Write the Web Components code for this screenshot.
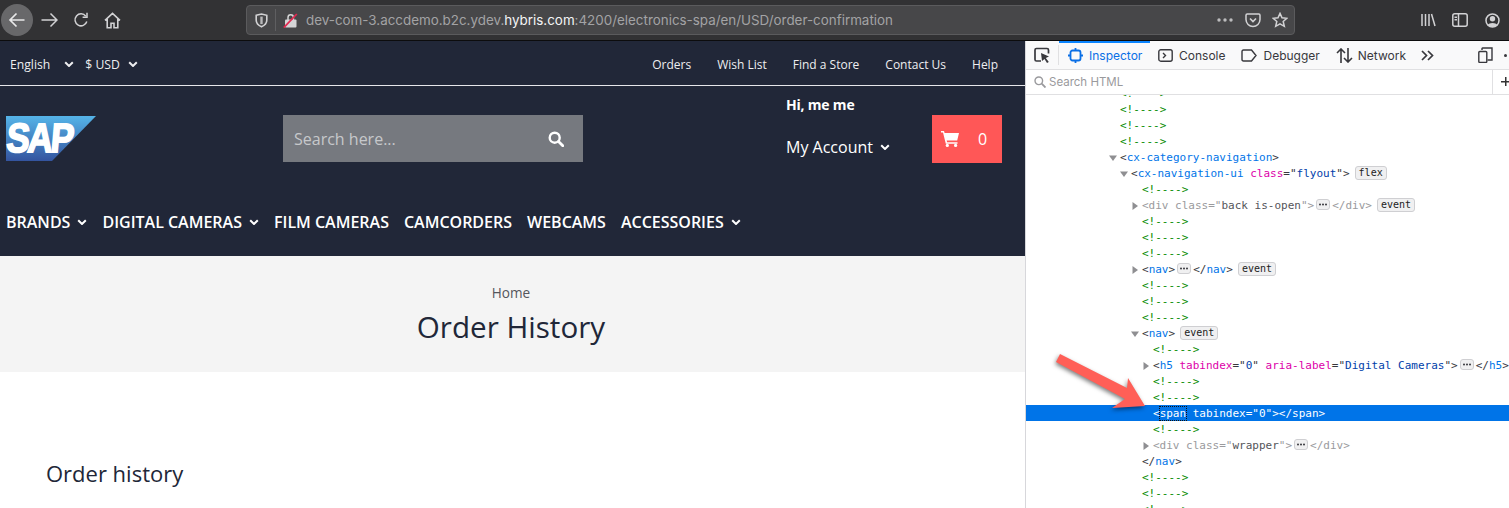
<!DOCTYPE html>
<html>
<head>
<meta charset="utf-8">
<title>Order History</title>
<style>
html, body { margin: 0; padding: 0; height: 100%; overflow: hidden; background: #fff; }
body { display: flex; flex-direction: column; height: 508px; position: relative; }
</style>
</head>
<body>
<browser-bar></browser-bar>
<div style="display:flex;flex:1;min-height:0">
  <store-page></store-page>
  <dev-tools></dev-tools>
</div>
<note-arrow></note-arrow>

<script>
class BrowserBar extends HTMLElement {
  constructor() {
    super();
    this.attachShadow({mode: 'open'});
    this.shadowRoot.innerHTML = `
<style>
:host { display: flex; align-items: center; height: 40px; background: #323234; border-bottom: 1px solid #0c0c0d; flex: none; font-family: Inter, "Liberation Sans", sans-serif; position: relative; }
svg { display: block; fill: none; stroke: #d2d2d4; stroke-width: 1.5; }
.nav { display: flex; align-items: center; width: 246px; flex: none; }
.back { width: 32px; height: 32px; border-radius: 50%; background: #68686a; margin-left: 1px; display: flex; align-items: center; justify-content: center; flex: none; }
.forward { margin-left: 8px; } .reload { margin-left: 15px; } .home { margin-left: 15px; }
.url { width: 1049px; height: 30px; box-sizing: border-box; background: #474749; border: 1px solid #5b5b5d; border-radius: 4px; display: flex; align-items: center; flex: none; }
.sep { width: 1px; height: 22px; background: #5f5f61; margin: 0 7px 0 7px; }
.addr { font-size: 13.4px; color: #a3a3a5; margin-left: 8px; white-space: nowrap; }
.addr b { color: #f4f4f5; font-weight: 400; }
.end { margin-left: auto; display: flex; align-items: center; }
.right { display: flex; align-items: center; margin-left: 126px; }
</style>
<div class="nav">
  <div class="back"><svg width="18" height="16" viewBox="0 0 18 16" style="stroke:#e8e8e9;stroke-width:1.7"><path d="M16.5 8H2M8.5 1.5 2 8l6.500 6.500"/></svg></div>
  <svg class="forward" width="17" height="16" viewBox="0 0 17 16"><path d="M.5 8h15M9.500 1.500 16 8 9.500 14.500"/></svg>
  <svg class="reload" width="16" height="16" viewBox="0 0 16 16"><path d="M13.800 9.500A6 6 0 1 1 12.800 4.200"/><path d="M14 .8v4.400H9.600" /></svg>
  <svg class="home" width="17" height="17" viewBox="0 0 17 17" style="stroke-width:1.600"><path d="M1 8.300 8.500 1.300 16 8.300M3.200 7v8.700h3.800v-4.400h3v4.400h3.800V7"/></svg>
</div>
<div class="url">
  <svg style="margin-left:8px" width="13" height="15" viewBox="0 0 13 15"><path d="M1.200 2.300 6.500 1l5.300 1.300v5c0 3-2.500 5.300-5.300 6.500C3.700 12.600 1.200 10.300 1.200 7.300z" stroke-width="1.600"/><path d="M6.500 3.600v7.500" stroke-width="2.400" stroke="#b9b9bb"/></svg>
  <div class="sep"></div>
  <svg width="15" height="15" viewBox="0 0 15 15" style="stroke:none"><rect x="2" y="6.500" width="11.500" height="8" rx="1" fill="#d5d5d6"/><path d="M5 7V4.500a2.700 2.700 0 0 1 5.400 0V7" fill="none" stroke="#d5d5d6" stroke-width="1.500"/><path d="M.8 14.600 13.800 1" stroke="#e22850" stroke-width="1.800"/></svg>
  <div class="addr">dev-com-3.accdemo.b2c.ydev.<b>hybris.com</b>:4200/electronics-spa/en/USD/order-confirmation</div>
  <div class="end">
    <svg width="16" height="4" viewBox="0 0 16 4" style="stroke:none;fill:#bcbcbe;margin-right:12px"><circle cx="2" cy="2" r="1.700"/><circle cx="8" cy="2" r="1.700"/><circle cx="14" cy="2" r="1.700"/></svg>
    <svg width="16" height="15" viewBox="0 0 16 15" style="margin-right:11px"><path d="M1 2.200Q1 1 2.200 1h11.600Q15 1 15 2.200V6.500a7 7 0 0 1-14 0z" stroke-width="1.500"/><path d="M5 5.500 8 8.500l3-3" stroke-width="1.700"/></svg>
    <svg width="16" height="16" viewBox="0 0 16 16" style="margin-right:6px"><path d="M8 1.400 10 5.800 14.900 6.300 11.200 9.500 12.300 14.300 8 11.800 3.700 14.300 4.800 9.500 1.100 6.300 6 5.800z"/></svg>
  </div>
</div>
<div class="right">
  <svg width="15" height="14" viewBox="0 0 15 14" style="stroke-width:1.500"><path d="M1 1v12M4.500 1v12M8 1v12M10.500 1 14 13"/></svg>
  <svg style="margin-left:16px" width="16" height="14" viewBox="0 0 16 14"><rect x=".8" y=".8" width="14.400" height="12.400" rx="2"/><path d="M6.500 1v12M2.500 4.300h2.500M2.500 6.800h2.500"/></svg>
  <svg style="margin-left:17px" width="15" height="15" viewBox="0 0 15 15"><circle cx="7.500" cy="7.500" r="6.500"/><circle cx="7.500" cy="5.800" r="2.700" fill="#d2d2d4" stroke="none"/><path d="M2.800 12c1-2.700 8.400-2.700 9.400 0a6.500 6.500 0 0 1-9.400 0z" fill="#d2d2d4" stroke="none"/></svg>
</div>`;
  }
}
customElements.define('browser-bar', BrowserBar);

const chev = (w, color) => `<svg width="${w}" height="${w * .65}" viewBox="0 0 10 6.500" style="display:inline-block;flex:none"><path d="M1.200 1.200 5 5l3.800-3.800" fill="none" stroke="${color}" stroke-width="2"/></svg>`;

class StoreTopbar extends HTMLElement {
  constructor() {
    super();
    this.attachShadow({mode: 'open'});
    this.shadowRoot.innerHTML = `
<style>
:host { display: flex; align-items: center; padding: 2px 27px 0 10px; height: 42px; border-bottom: 1px solid #e6e6ea; font-size: 12px; color: #eeeef0; }
.sel { display: flex; align-items: center; font-size: 12.2px; }
.lang { gap: 14px; margin-right: 11px; }
.cur { gap: 8px; }
.links { margin-left: auto; display: flex; gap: 26px; }
</style>
<div class="sel lang"><span>English</span>${chev(10, '#eeeef0')}</div>
<div class="sel cur"><span>$ USD</span>${chev(10, '#eeeef0')}</div>
<div class="links"><span>Orders</span><span>Wish List</span><span>Find a Store</span><span>Contact Us</span><span>Help</span></div>`;
  }
}
customElements.define('store-topbar', StoreTopbar);

class SapLogo extends HTMLElement {
  constructor() {
    super();
    this.attachShadow({mode: 'open'});
    this.shadowRoot.innerHTML = `
<style>
:host { display: block; position: relative; width: 90px; height: 45px; flex: none; }
svg { display: block; }
span { position: absolute; left: -1px; top: 2px; font: 700 41px/41px "Liberation Sans", sans-serif; color: #fff; letter-spacing: -2.500px; -webkit-text-stroke: 1.800px #fff; transform-origin: left bottom; transform: skewX(-5deg) scaleX(.85); }
</style>
<svg width="90" height="45" viewBox="0 0 90 45"><defs><linearGradient id="g" x1="0" y1="0" x2="0" y2="1"><stop offset="0" stop-color="#55b4e8"/><stop offset="1" stop-color="#34549f"/></linearGradient></defs><path d="M0 0H90L46 45H0z" fill="url(#g)"/></svg>
<span>SAP</span>`;
  }
}
customElements.define('sap-logo', SapLogo);

class StoreHeader extends HTMLElement {
  constructor() {
    super();
    this.attachShadow({mode: 'open'});
    this.shadowRoot.innerHTML = `
<style>
:host { display: flex; align-items: flex-start; height: 114px; padding-left: 6px; color: #fff; }
sap-logo { margin-top: 30px; }
.search { width: 300px; height: 47px; background: #76797f; margin: 29px 0 0 187px; display: flex; align-items: center; padding: 0 19px 0 11px; box-sizing: border-box; font-size: 16px; color: #c6c8cb; flex: none; }
.search svg { margin-left: auto; }
.acct { margin: 9px 0 0 203px; width: 146px; flex: none; }
.hi { font-size: 14px; font-weight: 700; line-height: 19px; letter-spacing: -.2px; }
.my { font-size: 16px; line-height: 22px; margin-top: 22px; display: flex; align-items: center; gap: 7px; }
.cart { width: 70px; height: 48px; background: #ff5757; margin-top: 29px; display: flex; align-items: center; font-size: 16px; flex: none; }
.cart svg { margin-left: 9px; }
.cart span { margin-left: 19px; }
</style>
<sap-logo></sap-logo>
<div class="search"><span>Search here...</span>
  <svg width="16" height="16" viewBox="0 0 16 16"><circle cx="6.700" cy="6.700" r="5" fill="none" stroke="#fff" stroke-width="2.400"/><path d="M10.500 10.500 14.800 14.800" stroke="#fff" stroke-width="2.800" stroke-linecap="round"/></svg>
</div>
<div class="acct">
  <div class="hi">Hi, me me</div>
  <div class="my"><span>My Account</span>${chev(10, '#fff')}</div>
</div>
<div class="cart">
  <svg width="18" height="16" viewBox="0 0 18 16" fill="#fff"><path d="M0 0h3l.6 2H18l-1.800 7.500H5.700l.4 1.700h10.400v1.500H4.800L2 1.500H0z"/><circle cx="6.300" cy="14.400" r="1.600"/><circle cx="14.600" cy="14.400" r="1.600"/></svg>
  <span>0</span>
</div>`;
  }
}
customElements.define('store-header', StoreHeader);

class StoreNav extends HTMLElement {
  constructor() {
    super();
    this.attachShadow({mode: 'open'});
    this.shadowRoot.innerHTML = `
<style>
:host { display: flex; align-items: flex-start; height: 56px; padding: 11px 0 0 6px; box-sizing: border-box; gap: 15px; color: #fff; font-size: 16px; font-weight: 600; line-height: 22px; }
div { display: flex; align-items: center; gap: 7px; white-space: nowrap; }
</style>
<div>BRANDS ${chev(10, '#fff')}</div>
<div>DIGITAL CAMERAS ${chev(10, '#fff')}</div>
<div>FILM CAMERAS</div>
<div>CAMCORDERS</div>
<div>WEBCAMS</div>
<div>ACCESSORIES ${chev(10, '#fff')}</div>`;
  }
}
customElements.define('store-nav', StoreNav);

class PageTitle extends HTMLElement {
  constructor() {
    super();
    this.attachShadow({mode: 'open'});
    this.shadowRoot.innerHTML = `
<style>
:host { display: flex; flex-direction: column; align-items: center; height: 116px; background: #f4f4f4; color: #212738; box-sizing: border-box; padding-top: 28px; padding-right: 3px; }
.crumb { font-size: 13.6px; line-height: 18px; color: #55565c; }
h1 { font-size: 29.6px; font-weight: 400; line-height: 40px; margin: 5px 0 0; }
</style>
<div class="crumb"><slot name="crumb"></slot></div>
<h1><slot></slot></h1>`;
  }
}
customElements.define('page-title', PageTitle);

class StorePage extends HTMLElement {
  constructor() {
    super();
    this.attachShadow({mode: 'open'});
    this.shadowRoot.innerHTML = `
<style>
:host { display: block; width: 1025px; flex: none; font-family: "Open Sans", "Liberation Sans", sans-serif; background: #fff; overflow: hidden; }
.dark { background: #212738; }
h2 { font-size: 22px; font-weight: 400; line-height: 30px; color: #212738; margin: 86px 0 0 46px; }
</style>
<div class="dark">
  <store-topbar></store-topbar>
  <store-header></store-header>
  <store-nav></store-nav>
</div>
<page-title><span slot="crumb">Home</span>Order History</page-title>
<h2>Order history</h2>`;
  }
}
customElements.define('store-page', StorePage);

// markup tokens for the inspector rows
const c = (k, t) => `<i class="${k}">${t}</i>`;
const open = (n) => c('p', '&lt;') + c('t', n);
const comment = c('g', '&lt;!----&gt;');
const badge = (t) => `<b class="badge">${t}</b>`;
const more = `<b class="badge more"><svg width="8" height="3" viewBox="0 0 8 3"><circle cx="1" cy="1.500" r="1"/><circle cx="4" cy="1.500" r="1"/><circle cx="7" cy="1.500" r="1"/></svg></b>`;
const rows = [
  [0, '', comment], [0, '', comment], [0, '', comment], [0, '', comment],
  [0, 'o', open('cx-category-navigation') + c('p', '&gt;')],
  [1, 'o', open('cx-navigation-ui') + ' ' + c('a', 'class') + c('p', '="') + c('v', 'flyout') + c('p', '"&gt;') + badge('flex')],
  [2, '', comment],
  [2, 'c', c('d', '&lt;div class="') + c('e', 'back is-open') + c('d', '"&gt;') + more + c('d', '&lt;/div&gt;') + badge('event')],
  [2, '', comment], [2, '', comment], [2, '', comment],
  [2, 'c', open('nav') + c('p', '&gt;') + more + c('p', '&lt;/') + c('t', 'nav') + c('p', '&gt;') + badge('event')],
  [2, '', comment], [2, '', comment], [2, '', comment],
  [2, 'o', open('nav') + c('p', '&gt;') + badge('event')],
  [3, '', comment],
  [3, 'c', open('h5') + ' ' + c('a', 'tabindex') + c('p', '="') + c('v', '0') + c('p', '"') + ' ' + c('a', 'aria-label') + c('p', '="') + c('v', 'Digital Cameras') + c('p', '"&gt;') + more + c('p', '&lt;/') + c('t', 'h5') + c('p', '&gt;')],
  [3, '', comment], [3, '', comment],
  [3, 's', '&lt;<span class="dot">span</span> tabindex="0"&gt;&lt;/span&gt;'],
  [3, '', comment],
  [3, 'c', c('d', '&lt;div class="') + c('e', 'wrapper') + c('d', '"&gt;') + more + c('d', '&lt;/div&gt;')],
  [2, '', c('p', '&lt;/') + c('t', 'nav') + c('p', '&gt;')],
  [2, '', comment], [2, '', comment], [2, '', comment]
];

class DevTools extends HTMLElement {
  constructor() {
    super();
    this.attachShadow({mode: 'open'});
    const tree = rows.map(([lvl, kind, html]) => {
      const tw = kind === 'o' ? '<svg class="tw" width="8" height="8" viewBox="0 0 8 8"><path d="M0 1.500h8L4 7z"/></svg>'
        : kind === 'c' ? '<svg class="tw" width="8" height="8" viewBox="0 0 8 8"><path d="M1.500 0v8L7 4z"/></svg>' : '';
      return `<div class="row${kind === 's' ? ' sel' : ''}" style="padding-left:${94 + lvl * 11}px">${tw}${html}</div>`;
    }).join('');
    this.shadowRoot.innerHTML = `
<style>
:host { display: flex; flex-direction: column; flex: 1; min-width: 0; border-left: 1px solid #d7d7db; background: #fff; font: 12px "Liberation Sans", Arimo, sans-serif; color: #38383d; overflow: hidden; }
.tabs { display: flex; align-items: center; height: 28px; background: #f9f9fa; border-bottom: 1px solid #e0e0e2; flex: none; position: relative; font-family: Inter, "Liberation Sans", sans-serif; font-size: 12px; white-space: nowrap; }
.tabs svg { display: block; flex: none; fill: none; stroke: #38383d; stroke-width: 1.400; }
.pick { margin-left: 8px; }
.vr { width: 1px; height: 20px; background: #e0e0e2; margin-left: 8px; flex: none; }
.tab { display: flex; align-items: center; gap: 6px; height: 28px; padding: 0 0 0 8px; flex: none; }
.tab.on { color: #0a6fe6; border-top: 2px solid #0a84ff; box-sizing: border-box; margin-left: 0; width: 91px; margin-top: -1px; }
.tab.on svg { stroke: #0a6fe6; stroke-width: 1.800; margin-left: 1px; }
.search { display: flex; align-items: center; height: 24px; border-bottom: 1px solid #e0e0e2; flex: none; color: #9a9a9d; font-family: Inter, "Liberation Sans", sans-serif; font-size: 11.5px; padding-left: 8px; gap: 3px; position: relative; }
.search svg { stroke: #9a9a9d; fill: none; stroke-width: 1.400; }
.search .plus { position: absolute; left: 466px; top: 0; height: 24px; border-left: 1px solid #e0e0e2; width: 20px; }
.search .plus::after { content: ""; position: absolute; left: 8px; top: 7px; width: 9px; height: 9px; background: linear-gradient(#333,#333) 4px 0/1.500px 9px no-repeat, linear-gradient(#333,#333) 0 4px/9px 1.500px no-repeat; }
.tree { flex: 1; overflow: hidden; min-height: 0; font: 11px/18px "DejaVu Sans Mono", monospace; }
.scroll { margin-top: -10px; }
.row { height: 16px; white-space: pre; position: relative; color: #38383d; }
.row i { font-style: normal; }
.tw { position: absolute; margin-left: -11px; margin-top: 5px; fill: #8f8f92; }
.p { color: #38383d; } .t { color: #0074e8; } .a { color: #dd00a9; } .v { color: #003eaa; }
.g { color: #058b00; } .d { color: #9a9a9d; } .e { color: #55555a; }
.badge { display: inline-block; font: 10px/12px "DejaVu Sans Mono", monospace; color: #222; background: #f0f0f1; border: 1px solid #cfcfd2; border-radius: 3px; padding: 0 3px; margin: 0 0 0 5px; vertical-align: 1px; font-weight: 400; }
.more { padding: 0 2px; height: 9px; width: 8px; line-height: 8px; vertical-align: -1px; box-sizing: content-box; margin: 0 2px; }
.more svg { fill: #38383d; display: block; margin-top: 3px; }
.sel { background: #0074e8; color: #fff; }
.dot { outline: 1px dotted #111; outline-offset: 0; }
</style>
<div class="tabs">
  <svg class="pick" width="16" height="16" viewBox="0 0 16 16"><path d="M7 14H2.500Q1 14 1 12.500V3Q1 1.500 2.500 1.500h10.500Q14.500 1.500 14.500 3v3.500" stroke-width="1.700"/><path d="M7 6 15 9.500 11.800 11 14.800 15 13 16 10.500 12 8 14z" fill="#38383d" stroke="none"/></svg>
  <div class="vr"></div>
  <div class="tab on"><svg width="15" height="15" viewBox="0 0 15 15"><rect x="2.500" y="2.500" width="10" height="10" rx="2"/><path d="M7.500 0v2.500M7.500 12.500V15M0 7.500h2.500M12.500 7.500H15"/></svg>Inspector</div>
  <div class="tab" style="padding-left:8px"><svg width="15" height="13" viewBox="0 0 15 13"><rect x=".8" y=".8" width="13.400" height="11.400" rx="2"/><path d="M5 4l2.500 2.500L5 9"/></svg>Console</div>
  <div class="tab" style="padding-left:16px"><svg width="16" height="13" viewBox="0 0 16 13"><path d="M2.500 1h8L15 6.500 10.500 12h-8Q1 12 1 10.500v-8Q1 1 2.500 1z"/></svg>Debugger</div>
  <div class="tab" style="padding-left:16px;gap:5px"><svg width="17" height="15" viewBox="0 0 17 15" style="stroke-width:1.600"><path d="M5 15V1M1 5 5 1l4 4M12 0v14M8 10l4 4 4-4"/></svg>Network</div>
  <svg style="margin-left:15px;stroke-width:1.700" width="13" height="11" viewBox="0 0 13 11"><path d="M1 1l4.500 4.500L1 10M7 1l4.500 4.500L7 10"/></svg>
  <svg style="margin-left:44px" width="15" height="16" viewBox="0 0 15 16"><path d="M4 3V1.500Q4 1 4.500 1H14v12H9.500"/><rect x=".8" y="4.500" width="8" height="11" rx="1"/></svg>
  <div style="width:3px;height:3px;border-radius:50%;background:#38383d;margin-left:11px;flex:none"></div>
</div>
<div class="search">
  <svg width="12" height="12" viewBox="0 0 12 12"><circle cx="4.800" cy="4.800" r="3.800"/><path d="M7.700 7.700 11.500 11.500" stroke-width="1.800"/></svg>
  <span>Search HTML</span>
  <div class="plus"></div>
</div>
<div class="tree"><div class="scroll">${tree}</div></div>`;
  }
}
customElements.define('dev-tools', DevTools);

class NoteArrow extends HTMLElement {
  constructor() {
    super();
    this.attachShadow({mode: 'open'});
    this.shadowRoot.innerHTML = `
<style>
:host { display: block; position: absolute; left: 1050px; top: 350px; width: 100px; height: 65px; }
svg { display: block; overflow: visible; filter: drop-shadow(-1px 2px 2px rgba(0,0,0,.5)); }
</style>
<svg width="100" height="65" viewBox="0 0 100 65"><path d="M10 4 77 38 78 28 95 56 62 58 75 49 6 12z" fill="#ff5f57"/></svg>`;
  }
}
customElements.define('note-arrow', NoteArrow);
</script>
</body>
</html>
